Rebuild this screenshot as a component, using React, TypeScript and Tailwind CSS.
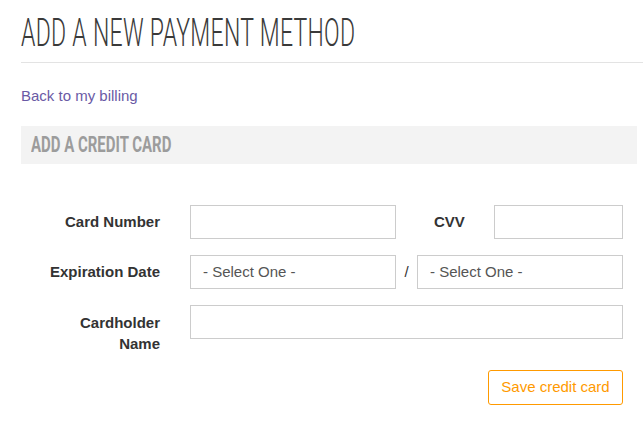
import { useState } from 'react';

const body = { fontFamily: '"Liberation Sans", Arial, sans-serif' };
const display = { fontFamily: 'Roboto, "Liberation Sans", sans-serif' };

function Field({ className = '' }: { className?: string }) {
  return (
    <input
      type="text"
      className={`h-[34px] border border-[#cccccc] bg-white px-3 text-[15px] text-[#555] outline-none ${className}`}
    />
  );
}

function SelectBox({ className = '' }: { className?: string }) {
  return (
    <div
      className={`flex h-[34px] items-center border border-[#cccccc] bg-white pl-[12px] text-[15px] text-[#555] ${className}`}
    >
      - Select One -
    </div>
  );
}

export default function App() {
  const [saved, setSaved] = useState(false);

  return (
    <div className="min-h-[447px] bg-white pl-[21px] text-[#333]" style={body}>
      {/* Page title */}
      <div className="h-[63px] border-b border-[#e3e3e3] pt-[13px]">
        <h1
          className="inline-block origin-left scale-x-[0.605] whitespace-nowrap text-[38px] font-light leading-[40px] tracking-[0.5px] text-[#3a3a3a]"
          style={display}
        >
          ADD A NEW PAYMENT METHOD
        </h1>
      </div>

      <div className="pt-[21px]">
        <a href="#" className="text-[15px] text-[#6a5aa5]">
          Back to my billing
        </a>
      </div>

      {/* Section band */}
      <div className="mr-[6px] mt-[18px] flex h-[38px] items-center bg-[#f3f3f3] pl-[10px]">
        <h2
          className="inline-block origin-left scale-x-[0.68] whitespace-nowrap text-[22px] font-bold leading-none text-[#9c9c9c]"
          style={display}
        >
          ADD A CREDIT CARD
        </h2>
      </div>

      {/* Form */}
      <form
        className="mt-[41px] flex w-[602px] flex-col gap-[16px]"
        onSubmit={(e) => {
          e.preventDefault();
          setSaved(true);
        }}
      >
        <div className="flex items-center">
          <label className="w-[139px] text-right text-[15px] font-bold">Card Number</label>
          <Field className="ml-[30px] w-[206px]" />
          <label className="ml-[38px] w-[31px] text-[15px] font-bold">CVV</label>
          <Field className="ml-[29px] w-[129px]" />
        </div>

        <div className="flex items-center">
          <label className="w-[139px] text-right text-[15px] font-bold">Expiration Date</label>
          <SelectBox className="ml-[30px] w-[206px]" />
          <span className="w-[21px] text-center text-[15px] text-[#333]">/</span>
          <SelectBox className="w-[206px]" />
        </div>

        <div className="flex h-[34px] items-start">
          <label className="ml-[19px] w-[120px] pt-[7px] text-right text-[15px] font-bold leading-[21px]">
            Cardholder Name
          </label>
          <Field className="ml-[30px] w-[433px]" />
        </div>

        <div className="mt-[15px] flex justify-end">
          <button
            type="submit"
            className="h-[35px] w-[135px] rounded-[3px] border border-[#ff9a00] bg-white text-[15px] text-[#ff9a00]"
          >
            {saved ? 'Saved' : 'Save credit card'}
          </button>
        </div>
      </form>
    </div>
  );
}
